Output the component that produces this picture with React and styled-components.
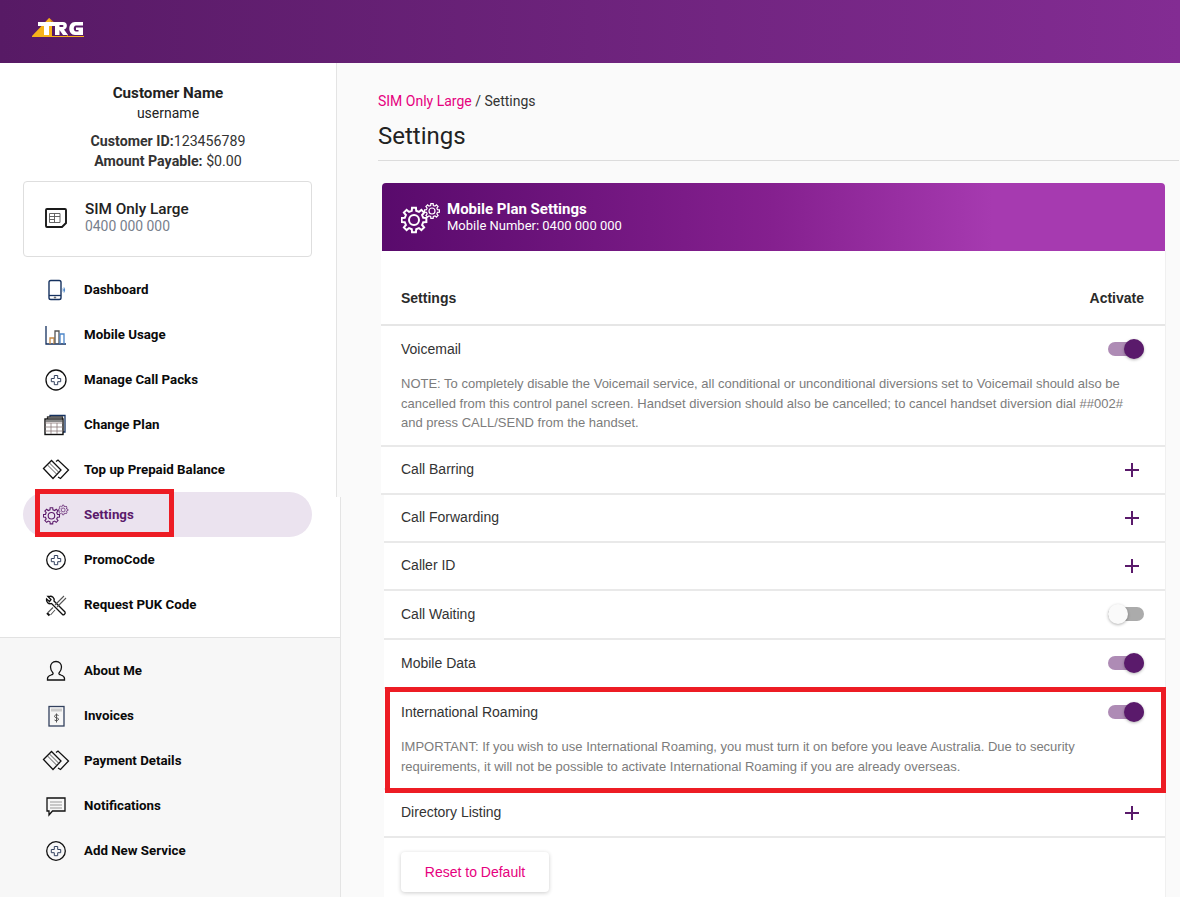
import React from 'react';
import styled, { createGlobalStyle } from 'styled-components';

const GlobalStyle = createGlobalStyle`
  html, body {
    margin: 0;
    padding: 0;
    height: 897px;
    overflow: hidden;
    background: #fafafa;
    font-family: Roboto, "Liberation Sans", sans-serif;
  }
  * { box-sizing: border-box; }
`;

const InkIcon = ({ children, color = '#111', w = 26, h = 24, vb = '0 0 26 24' }) => (
  <svg width={w} height={h} viewBox={vb} fill="none" stroke={color} strokeWidth="1.3">
    {children}
  </svg>
);

const PlusCircle = ({ r = 9.3 }) => (
  <InkIcon>
    <circle cx="13" cy="12" r={r} />
    <path d="M11.3 7.5h3.4v3h3v3.2h-3v3h-3.4v-3h-3v-3.2h3z" strokeWidth="1" stroke="#33415e" />
  </InkIcon>
);

const PhoneIcon = () => (
  <InkIcon>
    <rect x="6" y="2.500" width="12" height="19" rx="1.800" stroke="#15315f" strokeWidth="1.400" />
    <path d="M6 17.500h12" stroke="#15315f" />
    <circle cx="12" cy="19.500" r="0.700" strokeWidth="0.600" />
    <path d="M21 9.500c.8 1.500.8 3.500 0 5M20 10.500c.4 1 .4 2 0 3" strokeWidth="1" stroke="#4c86c9" />
  </InkIcon>
);

const BarsIcon = () => (
  <InkIcon>
    <path d="M3 3v18h20" stroke="#15315f" />
    <path d="M7 21v-6h4v6" stroke="#c78a45" />
    <path d="M12 21V8h4v13" stroke="#555" />
    <path d="M17 21V11h4v10" stroke="#4c86c9" />
  </InkIcon>
);

const PlanIcon = () => (
  <InkIcon>
    <path d="M7 4V2.500h15V19h-2" stroke="#15315f" />
    <path d="M4.500 6V4h15v2" stroke="#333" />
    <rect x="2" y="6" width="18" height="15.500" stroke="#111" strokeWidth="1.400" />
    <path d="M2 10h18M2 14h18M2 18h18M8 10v11M14 10v11" strokeWidth="0.800" stroke="#8a7a7a" />
    <path d="M3 8h16" strokeWidth="2" stroke="#888" />
  </InkIcon>
);

const CardsIcon = () => (
  <InkIcon w={28} h={22} vb="0 0 28 22">
    <path d="M1.500 9.500 9.500 1.500l9.500 9.500-8 8.500z" />
    <path d="M5.500 6l9.500 9.500M7.500 4l9.500 9.500" strokeWidth="1" stroke="#555" />
    <path d="M14 2.500l2-1.500 10.500 10L18.500 19.500l-2.500-1.500" />
  </InkIcon>
);

// cog drawn as an outline: 8 teeth round a ring, with a hole in the middle
const Gear = ({ cx, cy, r, color, width }) => {
  const inner = r * 0.76;
  const pt = (rad, a) => `${(cx + Math.cos(a) * rad).toFixed(2)} ${(cy + Math.sin(a) * rad).toFixed(2)}`;
  const step = Math.PI / 4;
  let d = '';
  for (let i = 0; i < 8; i++) {
    const a = i * step;
    d += `${i === 0 ? 'M' : 'L'}${pt(inner, a - step * 0.3)}L${pt(r, a - step * 0.2)}L${pt(r, a + step * 0.2)}L${pt(inner, a + step * 0.3)}`;
  }
  return (
    <g stroke={color} fill="none" strokeWidth={width}>
      <path d={`${d}Z`} />
      <circle cx={cx} cy={cy} r={r * 0.4} />
    </g>
  );
};

const GearsIcon = ({ color = '#5b1a6b', w = 26, h = 21, big = 1.700, small = 1.100 }) => (
  <svg width={w} height={h} viewBox="0 0 40 32">
    <Gear cx={13} cy={18} r={12.500} color={color} width={big} />
    <Gear cx={31} cy={9} r={7.500} color={color} width={small} />
  </svg>
);

const ToolsIcon = () => (
  <InkIcon>
    <path d="M5 3.500l3 3-1.500 2-3-2.500c-.5 3 2 5.500 5 4.500l11 11c1 1 3.500-1 2.500-2.500L11 8c1-3-2-5.500-5-4.500z" />
    <path d="M21 3l-9 9M23 5l-9 9M5 19.500 10 14.500M7.500 22 12 17" strokeWidth="1.100" stroke="#555" />
    <path d="M4 20l2.500 2.500" strokeWidth="2" />
  </InkIcon>
);

const PersonIcon = () => (
  <InkIcon>
    <path d="M13 2.500c-3.500 0-5.500 2.500-5.500 5.500 0 2.500 1 4.500 2.500 6 .5 1-.5 1.500-2 2-2 .6-3.500 1.500-3.500 3.500v1.500h17V19.500c0-2-1.500-2.900-3.500-3.500-1.500-.5-2.500-1-2-2 1.500-1.500 2.500-3.500 2.500-6 0-3-2-5.500-5.500-5.500z" />
  </InkIcon>
);

const InvoiceIcon = () => (
  <InkIcon>
    <rect x="6" y="2.500" width="15" height="19.500" stroke="#33415e" fill="#f7f7f7" />
    <path d="M8 6h11" strokeWidth="3" stroke="#ccc" />
    <path d="M15.500 11.500c-2-1.500-4-.5-4 1s4 1 4 2.500-2 2.500-4 1M13.500 9.500v9" strokeWidth="1" stroke="#555" />
  </InkIcon>
);

const ChatIcon = () => (
  <InkIcon>
    <path d="M4 4h18v13H9.500L6 21v-4H4z" />
    <path d="M7 8h12M7 11h12M7 14h12" strokeWidth="1" stroke="#999" />
  </InkIcon>
);

const primaryNav = [
  { label: 'Dashboard', icon: <PhoneIcon /> },
  { label: 'Mobile Usage', icon: <BarsIcon /> },
  { label: 'Manage Call Packs', icon: <PlusCircle r={10} /> },
  { label: 'Change Plan', icon: <PlanIcon /> },
  { label: 'Top up Prepaid Balance', icon: <CardsIcon /> },
  { label: 'Settings', icon: <GearsIcon />, active: true },
  { label: 'PromoCode', icon: <PlusCircle /> },
  { label: 'Request PUK Code', icon: <ToolsIcon /> },
];

const secondaryNav = [
  { label: 'About Me', icon: <PersonIcon /> },
  { label: 'Invoices', icon: <InvoiceIcon /> },
  { label: 'Payment Details', icon: <CardsIcon /> },
  { label: 'Notifications', icon: <ChatIcon /> },
  { label: 'Add New Service', icon: <PlusCircle /> },
];

const settings = [
  {
    label: 'Voicemail',
    toggle: true,
    height: 121,
    top: 45,
    note: 'NOTE: To completely disable the Voicemail service, all conditional or unconditional diversions set to Voicemail should also be cancelled from this control panel screen. Handset diversion should also be cancelled; to cancel handset diversion dial ##002# and press CALL/SEND from the handset.',
  },
  { label: 'Call Barring', height: 48, top: 44 },
  { label: 'Call Forwarding', height: 48, top: 44, inset: true },
  { label: 'Caller ID', height: 48, top: 44, inset: true },
  { label: 'Call Waiting', toggle: false, height: 49, top: 45, inset: true },
  { label: 'Mobile Data', toggle: true, height: 49, top: 45, inset: true },
  {
    label: 'International Roaming',
    toggle: true,
    height: 101,
    top: 45,
    inset: true,
    note: 'IMPORTANT: If you wish to use International Roaming, you must turn it on before you leave Australia. Due to security requirements, it will not be possible to activate International Roaming if you are already overseas.',
  },
  { label: 'Directory Listing', height: 48, top: 44, inset: true },
];

function App() {
  return (
    <>
      <GlobalStyle />
      <Page>
        <Header>
          <svg width="54" height="23" viewBox="0 0 54 23">
            <path d="M1 21 18 3l3 4v14z" fill="#f6b21a" />
            <path d="M18 3l19 18" stroke="#e08a1c" strokeWidth="1" fill="none" />
            <path d="M7 7h16v4h-5v9h-5v-9H7z" fill="#fff" />
            <path d="M23 7h9c5 0 5 6.500 1 7.500l4 5.500h-5l-3.500-5v5H24V11h-1zM28.500 10v2h3c1.300 0 1.300-2 0-2z" fill="#fff" />
            <path d="M52 10.500h-7c-3 0-3 6 0 6h2.500v-1.500H45v-2.500h7V20h-8c-7.500 0-7.500-13 0-13h8z" fill="#fff" />
            <path d="M1 21.500h52" stroke="#f6b21a" strokeWidth="1" />
          </svg>
        </Header>
        <Body>
          <Sidebar>
            <Profile>
              <CustomerName>Customer Name</CustomerName>
              <Username>username</Username>
              <Meta>
                <b>Customer ID:</b>123456789
              </Meta>
              <Meta>
                <b>Amount Payable:</b> $0.00
              </Meta>
            </Profile>
            <ServiceCard>
              <svg width="24" height="22" viewBox="0 0 24 22" fill="none" stroke="#1a1a1a">
                <path d="M3 2h18a1 1 0 0 1 1 1v13l-4 4H3a1 1 0 0 1-1-1V3a1 1 0 0 1 1-1z" strokeWidth="1.900" />
                <path d="M5.500 6.500H16v9H5.500zM5.500 9.500H16M10.500 6.500v9M5.500 12.500h5" strokeWidth="0.900" stroke="#555" />
              </svg>
              <div>
                <ServiceName>SIM Only Large</ServiceName>
                <ServiceNumber>0400 000 000</ServiceNumber>
              </div>
            </ServiceCard>
            <NavList>
              {primaryNav.map((item) => (
                <NavItem key={item.label} $active={item.active}>
                  <NavIcon>{item.icon}</NavIcon>
                  {item.label}
                </NavItem>
              ))}
            </NavList>
            <SecondaryNav>
              {secondaryNav.map((item) => (
                <NavItem key={item.label}>
                  <NavIcon>{item.icon}</NavIcon>
                  {item.label}
                </NavItem>
              ))}
            </SecondaryNav>
          </Sidebar>
          <Main>
            <Breadcrumb>
              <a>SIM Only Large</a> / Settings
            </Breadcrumb>
            <Title>Settings</Title>
            <Card>
              <CardHeader>
                <GearsIcon color="#fff" w={40} h={32} big={2} small={1.200} />
                <div>
                  <CardTitle>Mobile Plan Settings</CardTitle>
                  <CardSub>Mobile Number: 0400 000 000</CardSub>
                </div>
              </CardHeader>
              <CardColumns>
                <span>Settings</span>
                <span>Activate</span>
              </CardColumns>
              {settings.map((row) => (
                <Row key={row.label} $height={row.height} $inset={row.inset}>
                  <RowTop $height={row.top}>
                    {row.label}
                    {row.toggle === undefined ? (
                      <Plus />
                    ) : (
                      <Toggle $on={row.toggle}>
                        <i />
                      </Toggle>
                    )}
                  </RowTop>
                  {row.note && <Note>{row.note}</Note>}
                </Row>
              ))}
              <ResetBar>
                <ResetButton>Reset to Default</ResetButton>
              </ResetBar>
            </Card>
          </Main>
        </Body>
        <Highlight $x={35} $y={489} $w={139} $h={48} />
        <Highlight $x={385} $y={687} $w={781} $h={106} />
      </Page>
    </>
  );
}

export default App;

const Page = styled.div`
  position: relative;
  width: 1180px;
  height: 897px;
  overflow: hidden;
`;

const Header = styled.header`
  height: 63px;
  padding: 15px 0 0 31px;
  background: linear-gradient(90deg, #571a65 0%, #832c93 100%);
`;

const Body = styled.div`
  display: flex;
  height: 834px;
`;

const Sidebar = styled.aside`
  position: relative;
  flex: 0 0 341px;
  display: flex;
  flex-direction: column;
  background: #fff;
  border-right: 1px solid #e4e4e4;

  /* the upper part of the rail ends a little short of the lower one */
  &::after {
    content: '';
    position: absolute;
    top: 0;
    right: -1px;
    width: 4px;
    height: 434px;
    background: #fafafa;
    border-left: 1px solid #e4e4e4;
  }
`;

const Profile = styled.div`
  height: 118px;
  padding: 20px 4px 0 0;
  text-align: center;
  color: #222;
`;

const CustomerName = styled.div`
  font-size: 15.200px;
  font-weight: 700;
  line-height: 20px;
`;

const Username = styled.div`
  font-size: 14px;
  line-height: 21px;
  margin-bottom: 7px;
`;

const Meta = styled.div`
  font-size: 14.200px;
  line-height: 20px;
  color: #333;
`;

const ServiceCard = styled.div`
  display: flex;
  align-items: center;
  gap: 17px;
  width: 289px;
  height: 76px;
  margin-left: 23px;
  padding: 0 0 3px 20px;
  border: 1px solid #dedede;
  border-radius: 4px;
`;

const ServiceName = styled.div`
  font-size: 15.300px;
  font-weight: 500;
  line-height: 18px;
  color: #222;
`;

const ServiceNumber = styled.div`
  font-size: 13.900px;
  line-height: 17px;
  color: #78808c;
`;

const NavList = styled.nav`
  display: flex;
  flex-direction: column;
  padding: 10px 0 0 23px;
  height: 381px;
  border-bottom: 1px solid #e2e2e2;
`;

const SecondaryNav = styled(NavList)`
  flex: 1;
  padding-top: 10px;
  background: #f7f7f7;
  border-bottom: 0;
`;

const NavItem = styled.a`
  display: flex;
  align-items: center;
  gap: 14px;
  width: 289px;
  height: 45px;
  flex: none;
  font-size: 13.300px;
  font-weight: 700;
  color: ${(p) => (p.$active ? '#5a1a6b' : '#0a0a0a')};
  background: ${(p) => (p.$active ? '#ebe3ef' : 'transparent')};
  border-radius: 23px;
`;

const NavIcon = styled.span`
  display: flex;
  justify-content: center;
  width: 28px;
  margin-left: 19px;
`;

const Main = styled.main`
  flex: 1;
  padding: 28px 1px 0 37px;
  background: #fafafa;
  min-width: 0;
`;

const Breadcrumb = styled.div`
  font-size: 14px;
  line-height: 20px;
  color: #333;

  a {
    color: #e6007e;
  }
`;

const Title = styled.h1`
  margin: 0;
  height: 50px;
  padding-top: 9px;
  font-size: 24px;
  font-weight: 400;
  line-height: 32px;
  color: #222;
  border-bottom: 1px solid #dcdcdc;
`;

const Card = styled.section`
  width: 784px;
  margin: 22px 0 0 3px;
`;

const CardHeader = styled.div`
  display: flex;
  align-items: center;
  gap: 6px;
  height: 68px;
  margin-left: 1px;
  padding: 1px 0 0 19px;
  border-radius: 4px 4px 0 0;
  background: linear-gradient(90deg, #590a6c 0%, #85208f 50%, #a63ab0 78%, #a63ab0 100%);
`;

const CardTitle = styled.div`
  font-size: 15px;
  font-weight: 700;
  line-height: 17px;
  color: #fff;
`;

const CardSub = styled.div`
  font-size: 13px;
  line-height: 16px;
  color: #fff;
`;

const CardColumns = styled.div`
  display: flex;
  align-items: center;
  justify-content: space-between;
  height: 75px;
  padding: 20px 21px 0 20px;
  font: 700 14px "Liberation Sans", Arial, sans-serif;
  color: #2a2a2a;
  background: #fff;
  border-bottom: 2px solid #e6e6e6;
  box-shadow: 1px 0 0 #f0f0f0;
`;

const Row = styled.div`
  height: ${(p) => p.$height}px;
  margin-left: ${(p) => (p.$inset ? '3px' : '0')};
  padding: 0 21px 0 ${(p) => (p.$inset ? '17px' : '20px')};
  font: 14px "Liberation Sans", Arial, sans-serif;
  color: #333;
  background: #fff;
  border-bottom: 2px solid #e9e9e9;
  box-shadow: 1px 0 0 #f0f0f0;
`;

const RowTop = styled.div`
  display: flex;
  align-items: center;
  justify-content: space-between;
  height: ${(p) => p.$height}px;
`;

const Note = styled.p`
  margin: 3px 0 0;
  font-size: 13px;
  line-height: 19.500px;
  color: #7c7c7c;
`;

const Plus = styled.span`
  position: relative;
  width: 14px;
  height: 14px;
  margin: 1px 5px 0 0;

  &::before,
  &::after {
    content: '';
    position: absolute;
    background: #5a1a6b;
  }
  &::before {
    left: 0;
    right: 0;
    top: 6px;
    height: 2px;
  }
  &::after {
    top: 0;
    bottom: 0;
    left: 6px;
    width: 2px;
  }
`;

const Toggle = styled.span`
  position: relative;
  width: 36px;
  height: 14px;
  margin-top: 1px;
  border-radius: 7px;
  background: ${(p) => (p.$on ? '#ae8bb5' : '#ababab')};

  i {
    position: absolute;
    top: -3px;
    left: ${(p) => (p.$on ? '16px' : '0')};
    width: 20px;
    height: 20px;
    border-radius: 50%;
    background: ${(p) => (p.$on ? '#5a1a6b' : '#fafafa')};
    box-shadow: 0 1px 3px rgba(0, 0, 0, 0.3);
  }
`;

const ResetBar = styled.div`
  margin-left: 3px;
  padding: 14px 0 0 17px;
  height: 60px;
  background: #fff;
  box-shadow: 1px 0 0 #f0f0f0;
`;

const ResetButton = styled.button`
  width: 148px;
  height: 40px;
  border: 0;
  border-radius: 4px;
  background: #fff;
  color: #e6007e;
  font: 14px "Liberation Sans", Arial, sans-serif;
  box-shadow: 0 1px 4px rgba(0, 0, 0, 0.2);
`;

// red annotation boxes drawn over the screenshot
const Highlight = styled.div`
  position: absolute;
  left: ${(p) => p.$x}px;
  top: ${(p) => p.$y}px;
  width: ${(p) => p.$w}px;
  height: ${(p) => p.$h}px;
  border: 5px solid #ed1c24;
`;
